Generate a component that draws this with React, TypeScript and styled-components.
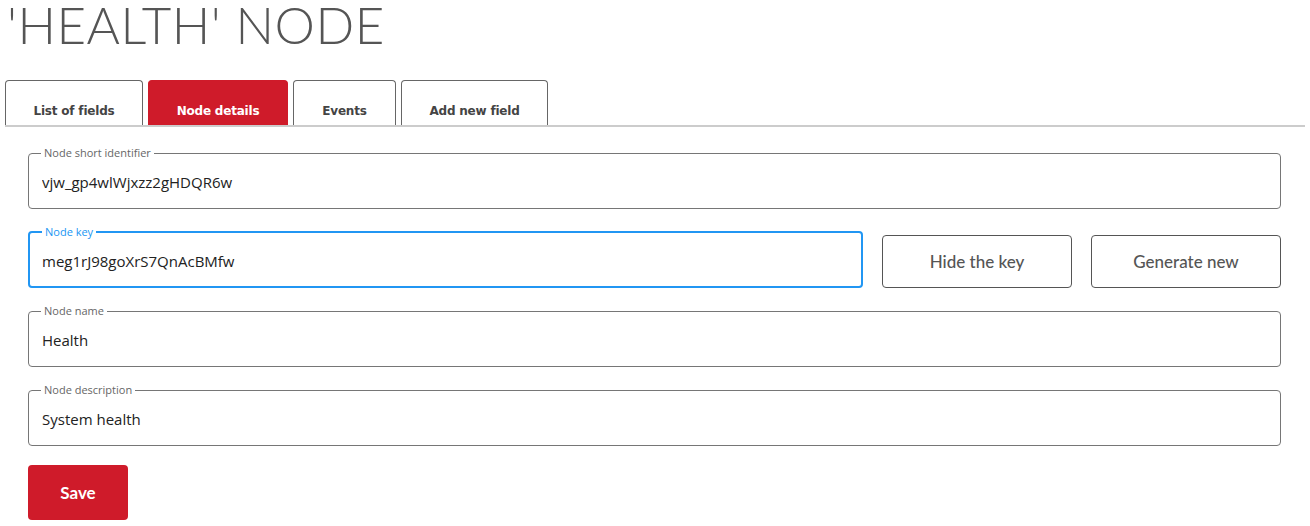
import React from "react";
import styled, { createGlobalStyle } from "styled-components";

const Global = createGlobalStyle`
  html, body { margin: 0; padding: 0; background: #fff; }
  body { font-family: "Open Sans", "Noto Sans", sans-serif; }
  * { box-sizing: border-box; }
`;

const RED = "#cf1b2a";
const BLUE = "#2196f3";

const Page = styled.div`
  padding: 0 5px;
  width: 1310px;
`;

const Title = styled.h1`
  margin: 0;
  padding: 1px 0 0 2px;
  height: 80px;
  font-family: "Lato", sans-serif;
  font-weight: 300;
  font-size: 51px;
  line-height: 48px;
  color: #555;
  letter-spacing: 0.5px;
  white-space: nowrap;
`;

const TabBar = styled.div`
  display: flex;
  gap: 5px;
  border-bottom: 2px solid #cccccc;
  height: 47px;
`;

const Tab = styled.button<{ $active?: boolean; $w: number }>`
  width: ${(p) => p.$w}px;
  height: 45px;
  padding: 15px 0 0;
  border: 1px solid ${(p) => (p.$active ? RED : "#666")};
  border-bottom: none;
  border-radius: 4px 4px 0 0;
  background: ${(p) => (p.$active ? RED : "#fff")};
  color: ${(p) => (p.$active ? "#fff" : "#444")};
  font-family: "DejaVu Sans", sans-serif;
  font-weight: bold;
  font-size: 12px;
  letter-spacing: -0.2px;
  text-align: center;
  cursor: pointer;
`;

const Content = styled.div`
  padding: 19px 24px 0 23px;
  display: flex;
  flex-direction: column;
  gap: 16px;
`;

const Row = styled.div`
  display: flex;
  align-items: flex-end;
  gap: 19px;
`;

const Field = styled.fieldset<{ $focus?: boolean }>`
  flex: 1 1 auto;
  width: 100%;
  margin: 0;
  padding: 0 ${(p) => (p.$focus ? 12 : 13)}px;
  height: 63px;
  border: ${(p) => (p.$focus ? `2px solid ${BLUE}` : "1px solid #767676")};
  border-radius: 4px;
  min-width: 0;
`;

const Legend = styled.legend<{ $focus?: boolean }>`
  font-family: "Open Sans", sans-serif;
  font-size: 11px;
  line-height: 14px;
  color: ${(p) => (p.$focus ? BLUE : "#666")};
  padding: 0 3px;
  margin-left: ${(p) => (p.$focus ? 0 : -1)}px;
`;

const Input = styled.input<{ $focus?: boolean }>`
  display: block;
  width: 100%;
  height: ${(p) => (p.$focus ? 44 : 43)}px;
  border: none;
  outline: none;
  background: transparent;
  padding: 0;
  font-family: "Open Sans", sans-serif;
  font-size: 15px;
  color: #222;
`;

const OutlineButton = styled.button`
  width: 190px;
  height: 53px;
  flex: none;
  border: 1px solid #555;
  border-radius: 4px;
  background: #fff;
  color: #555;
  font-family: "Lato", sans-serif;
  font-weight: 500;
  font-size: 17px;
  cursor: pointer;
`;

const SaveButton = styled.button`
  width: 100px;
  height: 55px;
  border: none;
  border-radius: 4px;
  background: ${RED};
  color: #fff;
  font-family: "Lato", sans-serif;
  font-weight: bold;
  font-size: 17px;
  cursor: pointer;
  margin-top: 3px;
`;

const tabs = [
  { label: "List of fields", w: 138 },
  { label: "Node details", w: 140, active: true },
  { label: "Events", w: 103 },
  { label: "Add new field", w: 147 },
];

function TextField({ label, value, focus }: { label: string; value: string; focus?: boolean }) {
  return (
    <Field $focus={focus}>
      <Legend $focus={focus}>{label}</Legend>
      <Input $focus={focus} defaultValue={value} />
    </Field>
  );
}

export default function App() {
  return (
    <Page>
      <Global />
      <Title>'HEALTH' NODE</Title>
      <TabBar>
        {tabs.map((t) => (
          <Tab key={t.label} $w={t.w} $active={t.active}>
            {t.label}
          </Tab>
        ))}
      </TabBar>
      <Content>
        <TextField label="Node short identifier" value="vjw_gp4wlWjxzz2gHDQR6w" />
        <Row>
          <TextField label="Node key" value="meg1rJ98goXrS7QnAcBMfw" focus />
          <OutlineButton>Hide the key</OutlineButton>
          <OutlineButton>Generate new</OutlineButton>
        </Row>
        <TextField label="Node name" value="Health" />
        <TextField label="Node description" value="System health" />
        <div>
          <SaveButton>Save</SaveButton>
        </div>
      </Content>
    </Page>
  );
}
